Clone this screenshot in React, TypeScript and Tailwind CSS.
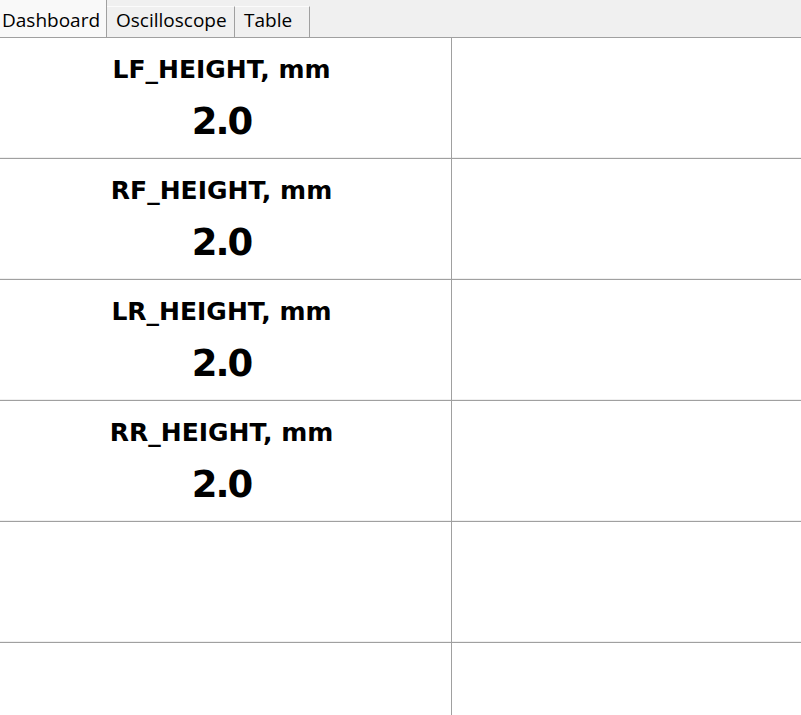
import React from 'react';

const SENSORS = ['LF_HEIGHT, mm', 'RF_HEIGHT, mm', 'LR_HEIGHT, mm', 'RR_HEIGHT, mm', '', ''];

function Tab({ label, active, width }: { label: string; active?: boolean; width: string }) {
  return (
    <div
      className={`flex items-end border-r border-[#a0a0a0] ${width} ${
        active ? 'h-[37px] bg-[#f9f9f9] pl-[2px]' : 'mt-[6px] h-[31px] border-t border-t-[#fbfbfb] bg-[#f0f0f0] pl-[9px]'
      }`}
    >
      <span className="pb-[5px] text-[19px] leading-[23px] text-black">{label}</span>
    </div>
  );
}

function Cell({ label }: { label: string }) {
  return (
    <div className="flex h-[121px] flex-col items-center border-b border-[#a0a0a0] pr-[8px] pt-[17px] shadow-[inset_0_-1px_0_#f0f0f0]">
      {label && (
        <>
          <div className="text-[25px] font-bold leading-[30px] text-black">{label}</div>
          <div className="mt-[17px] text-[37px] font-bold leading-[40px] tracking-[-2px] text-black">2.0</div>
        </>
      )}
    </div>
  );
}

export default function App() {
  return (
    <div className="h-[715px] w-[801px] overflow-hidden bg-white" style={{ fontFamily: '"DejaVu Sans", Verdana, sans-serif' }}>
      {/* tab strip */}
      <div
        className="flex h-[38px] border-b border-[#a0a0a0] bg-[#f0f0f0]"
        style={{ fontFamily: '"Open Sans", "Noto Sans", sans-serif' }}
      >
        <Tab label="Dashboard" active width="w-[107px]" />
        <Tab label="Oscilloscope" width="w-[128px]" />
        <Tab label="Table" width="w-[75px]" />
      </div>

      {/* dashboard grid */}
      <div className="grid grid-cols-[452px_1fr]">
        <div className="flex flex-col border-r border-[#a0a0a0]">
          {SENSORS.map((s, i) => (
            <Cell key={i} label={s} />
          ))}
        </div>
        <div className="flex flex-col">
          {SENSORS.map((_, i) => (
            <Cell key={i} label="" />
          ))}
        </div>
      </div>
    </div>
  );
}
